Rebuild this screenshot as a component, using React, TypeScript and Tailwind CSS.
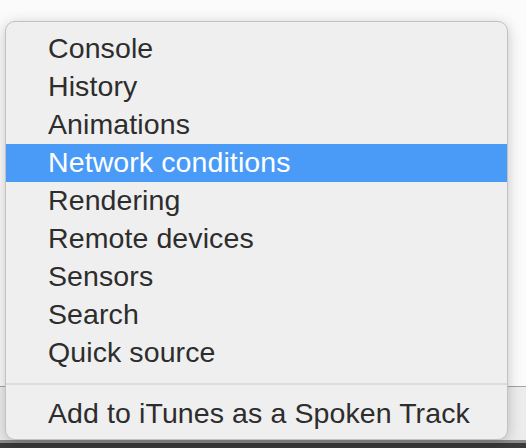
const items = [
  "Console",
  "History",
  "Animations",
  "Network conditions",
  "Rendering",
  "Remote devices",
  "Sensors",
  "Search",
  "Quick source",
];

const selected = "Network conditions";

function MenuItem({ label, active }: { label: string; active?: boolean }) {
  return (
    <div
      className={`h-[38px] flex items-center pl-[42px] text-[28.5px] leading-none tracking-[0.1px] ${
        active ? "bg-[#4a9bf8] text-white" : "text-[#2d2d2d]"
      }`}
    >
      <span className="-mt-[1px]">{label}</span>
    </div>
  );
}

export default function App() {
  return (
    <div
      className="relative w-[526px] h-[448px] overflow-hidden bg-white"
      style={{ fontFamily: '"Liberation Sans", Arial, sans-serif' }}
    >
      {/* window behind the menu */}
      <div className="flex flex-col h-full">
        <div className="h-[386px] bg-[#fbfbfb]" />
        <div className="h-px bg-[#a3a3a3]" />
        <div className="flex-1 bg-[#ececec]" />
        <div className="h-[3px] bg-[#8c8c8c]" />
        <div className="h-[5px] bg-[#3a3a3a]" />
      </div>

      {/* context menu */}
      <div className="absolute left-[5px] top-[21px] w-[503px] rounded-[10px] border border-[#c2c2c2] bg-[#efefef] pt-[8px] pb-[6px] shadow-[0_3px_14px_rgba(0,0,0,0.22)] overflow-hidden">
        {items.map((label) => (
          <MenuItem key={label} label={label} active={label === selected} />
        ))}
        <div className="mt-[11px] mb-[10px] h-[2px] bg-[#dcdcdc]" />
        <MenuItem label="Add to iTunes as a Spoken Track" />
      </div>
    </div>
  );
}
